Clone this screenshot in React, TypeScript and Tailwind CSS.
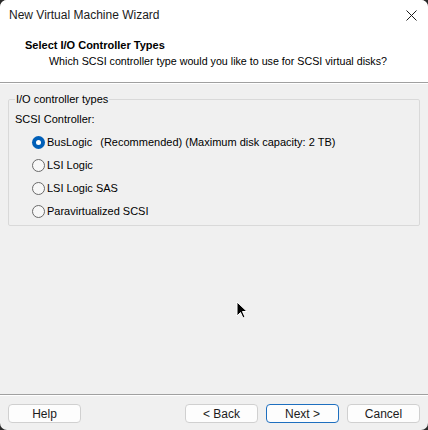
import React from 'react';

const options = [
  { label: 'BusLogic', note: '(Recommended) (Maximum disk capacity: 2 TB)', checked: true },
  { label: 'LSI Logic' },
  { label: 'LSI Logic SAS' },
  { label: 'Paravirtualized SCSI' },
];

function Radio({ checked }: { checked?: boolean }) {
  if (checked) {
    return (
      <span className="flex h-[13px] w-[13px] items-center justify-center rounded-full bg-[#005fb8]">
        <span className="h-[5px] w-[5px] rounded-full bg-white" />
      </span>
    );
  }
  return <span className="h-[13px] w-[13px] rounded-full border border-[#6a6a6a] bg-[#f7f7f7]" />;
}

function Button({ children, primary }: { children: React.ReactNode; primary?: boolean }) {
  return (
    <button
      className={
        primary
          ? 'h-[19px] w-[73px] rounded-[4px] border border-[#1e6fbf] bg-[#fdfdfd] text-[12px] text-[#1b1b1b]'
          : 'h-[19px] w-[73px] rounded-[4px] border border-[#d0d0d0] bg-[#fdfdfd] text-[12px] text-[#1b1b1b]'
      }
    >
      {children}
    </button>
  );
}

export default function App() {
  return (
    <div className="relative h-[430px] w-[428px] bg-[#2a2a2a] font-['Liberation_Sans',Arial,sans-serif]">
      <div className="flex h-full flex-col overflow-hidden rounded-[7px] bg-[#f0f0f0]">
        {/* Barre de titre */}
        <div className="flex h-[30px] items-center justify-between bg-white pl-[9px] pr-[11px]">
          <span className="text-[12px] text-[#1b1b1b]">New Virtual Machine Wizard</span>
          <svg width="11" height="11" viewBox="0 0 11 11" className="text-[#1b1b1b]">
            <path d="M0.5 0.5 L10.5 10.5 M10.5 0.5 L0.5 10.5" stroke="currentColor" strokeWidth="1" />
          </svg>
        </div>

        {/* En-tete */}
        <div className="h-[52px] bg-white pl-[25px] pt-[8px]">
          <div className="text-[11px] font-bold leading-[14px] text-black">Select I/O Controller Types</div>
          <div className="pl-[24px] pt-[2px] text-[10.7px] leading-[14px] text-black">
            Which SCSI controller type would you like to use for SCSI virtual disks?
          </div>
        </div>
        <div className="h-px bg-[#a0a0a0]" />
        <div className="h-px bg-white" />

        {/* Contenu */}
        <div className="flex-1 px-[8px] pt-[8px]">
          <fieldset className="h-[134px] rounded-[2px] border border-[#d9d9d9] px-[6px]">
            <legend className="px-[1px] text-[11px] leading-[14px] text-black">I/O controller types</legend>
            <div className="pt-[6px] text-[11px] leading-[14px] text-black">SCSI Controller:</div>
            <div className="flex flex-col gap-[9px] pl-[17px] pt-[9px]">
              {options.map((o) => (
                <div key={o.label} className="flex h-[14px] items-center text-[11px] text-black">
                  <Radio checked={o.checked} />
                  <span className="ml-[2px]">{o.label}</span>
                  {o.note && <span className="ml-[8px]">{o.note}</span>}
                </div>
              ))}
            </div>
          </fieldset>
        </div>

        {/* Boutons */}
        <div className="h-px bg-[#a0a0a0]" />
        <div className="h-px bg-white" />
        <div className="flex h-[34px] items-start justify-between px-[8px] pt-[8px]">
          <Button>Help</Button>
          <div className="flex gap-[8px]">
            <Button>&lt; Back</Button>
            <Button primary>Next &gt;</Button>
            <Button>Cancel</Button>
          </div>
        </div>
      </div>

      {/* Curseur */}
      <svg className="absolute left-[236px] top-[301px]" width="12" height="19" viewBox="0 0 12 19">
        <path d="M1 1 L1 15 L4.5 11.5 L7 17 L9 16 L6.5 10.5 L11 10.5 Z" fill="black" stroke="white" strokeWidth="1" />
      </svg>
    </div>
  );
}
